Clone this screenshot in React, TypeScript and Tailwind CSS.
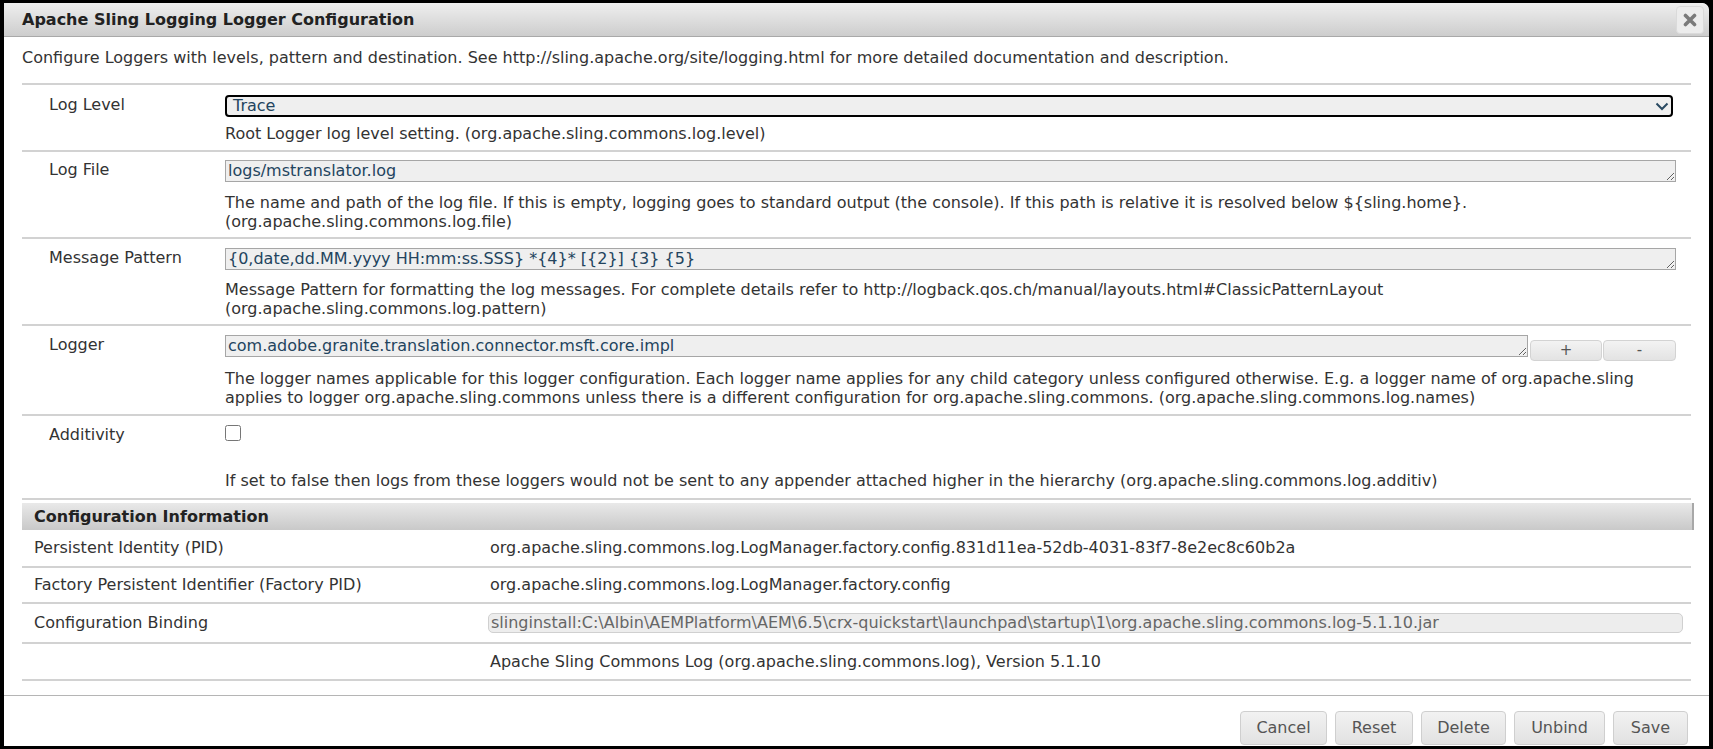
import React from "react";

const FONT = "font-['DejaVu_Sans','Verdana',sans-serif]";

function Row({
  label,
  children,
  className = "",
}: {
  label: string;
  children: React.ReactNode;
  className?: string;
}) {
  return (
    <div className={`flex border-t-2 border-[#d2d2d2] ${className}`}>
      <div className="w-[203px] shrink-0 pl-[27px] leading-[19px]">{label}</div>
      <div className="flex-1 pr-[15px] min-w-0">{children}</div>
    </div>
  );
}

function Help({ lines }: { lines: string[] }) {
  return (
    <div className="leading-[19px] whitespace-nowrap">
      {lines.map((l, i) => (
        <div key={i}>{l}</div>
      ))}
    </div>
  );
}

function Field({ value, className = "" }: { value: string; className?: string }) {
  return (
    <textarea
      readOnly
      rows={1}
      defaultValue={value}
      className={`block h-[22px] w-full resize overflow-hidden bg-[#efefef] border border-[#a6a6a6] px-[2px] py-0 leading-[20px] text-[#23445e] text-[16px] ${FONT} ${className}`}
    />
  );
}

function SmallBtn({ children }: { children: React.ReactNode }) {
  return (
    <div className="h-[21px] flex items-center justify-center rounded-[4px] border border-[#d3d3d3] bg-gradient-to-b from-[#f3f3f3] to-[#e3e3e3] text-[#555] text-[15px]">
      {children}
    </div>
  );
}

function FooterBtn({ children, w }: { children: React.ReactNode; w: string }) {
  return (
    <div
      className={`${w} h-[34px] flex items-center justify-center rounded-[4px] border border-[#cfcfcf] bg-gradient-to-b from-[#f2f2f2] to-[#e2e2e2] text-[#555] text-[16px]`}
    >
      {children}
    </div>
  );
}

function InfoRow({
  label,
  children,
  h,
}: {
  label: string;
  children: React.ReactNode;
  h: string;
}) {
  return (
    <div className={`flex items-center ${h} border-b-2 border-[#d2d2d2]`}>
      <div className="w-[466px] shrink-0 pl-[12px]">{label}</div>
      <div className="flex-1 min-w-0 pr-[8px]">{children}</div>
    </div>
  );
}

export default function App() {
  const binding = String.raw`slinginstall:C:\Albin\AEMPlatform\AEM\6.5\crx-quickstart\launchpad\startup\1\org.apache.sling.commons.log-5.1.10.jar`;
  return (
    <div className={`w-[1713px] h-[749px] bg-black pt-[3px] px-[4px] pb-[3px] ${FONT} text-[16px] text-[#333]`}>
      <div className="h-full bg-white flex flex-col overflow-hidden rounded-tr-[7px]">
        {/* Title bar */}
        <div className="h-[34px] shrink-0 flex items-center justify-between pl-[18px] pr-[5px] bg-gradient-to-b from-[#efefef] to-[#cdcdcd] border-b border-[#a9a9a9] rounded-tr-[7px]">
          <div className="font-bold text-[16px] text-[#222]">Apache Sling Logging Logger Configuration</div>
          <div className="w-[28px] h-[28px] rounded-[4px] bg-[#ececec] border border-[#dadada] flex items-center justify-center">
            <svg width="14" height="14" viewBox="0 0 14 14">
              <path d="M2.5 2.5 L11.5 11.5 M11.5 2.5 L2.5 11.5" stroke="#7a7a7a" strokeWidth="3.6" strokeLinecap="round" />
            </svg>
          </div>
        </div>

        {/* Content */}
        <div className="px-[18px] flex-1 min-h-0">
          <div className="pt-[11px] pb-[16px] leading-[19px] whitespace-nowrap">
            Configure Loggers with levels, pattern and destination. See http://sling.apache.org/site/logging.html for more detailed documentation and description.
          </div>

          {/* Log Level */}
          <Row label="Log Level" className="pt-[10px] pb-[7px]">
            <div className="relative mr-[3px]">
              <div className="h-[22px] rounded-[4px] border-2 border-black bg-[#efefef] pl-[6px] flex items-center text-[#23445e]">
                Trace
              </div>
              <svg className="absolute right-[4px] top-[7px]" width="14" height="9" viewBox="0 0 14 9">
                <path d="M1.5 1.5 L7 7 L12.5 1.5" stroke="#2a4a62" strokeWidth="2" fill="none" />
              </svg>
            </div>
            <div className="mt-[7px]">
              <Help lines={["Root Logger log level setting. (org.apache.sling.commons.log.level)"]} />
            </div>
          </Row>

          {/* Log File */}
          <Row label="Log File" className="pt-[8px] pb-[6px]">
            <Field value="logs/mstranslator.log" />
            <div className="mt-[11px]">
              <Help
                lines={[
                  "The name and path of the log file. If this is empty, logging goes to standard output (the console). If this path is relative it is resolved below ${sling.home}.",
                  "(org.apache.sling.commons.log.file)",
                ]}
              />
            </div>
          </Row>

          {/* Message Pattern */}
          <Row label="Message Pattern" className="pt-[9px] pb-[6px]">
            <Field value={"{0,date,dd.MM.yyyy HH:mm:ss.SSS} *{4}* [{2}] {3} {5}"} />
            <div className="mt-[10px]">
              <Help
                lines={[
                  "Message Pattern for formatting the log messages. For complete details refer to http://logback.qos.ch/manual/layouts.html#ClassicPatternLayout",
                  "(org.apache.sling.commons.log.pattern)",
                ]}
              />
            </div>
          </Row>

          {/* Logger */}
          <Row label="Logger" className="pt-[9px] pb-[7px]">
            <div className="flex items-start">
              <div className="flex-1 min-w-0">
                <Field value="com.adobe.granite.translation.connector.msft.core.impl" />
              </div>
              <div className="w-[72px] ml-[2px] mt-[5px]">
                <SmallBtn>+</SmallBtn>
              </div>
              <div className="w-[73px] ml-[1px] mt-[5px]">
                <SmallBtn>-</SmallBtn>
              </div>
            </div>
            <div className="mt-[8px]">
              <Help
                lines={[
                  "The logger names applicable for this logger configuration. Each logger name applies for any child category unless configured otherwise. E.g. a logger name of org.apache.sling",
                  "applies to logger org.apache.sling.commons unless there is a different configuration for org.apache.sling.commons. (org.apache.sling.commons.log.names)",
                ]}
              />
            </div>
          </Row>

          {/* Additivity */}
          <Row label="Additivity" className="pt-[9px] pb-[8px]">
            <input type="checkbox" className="block w-[16px] h-[16px] m-0" />
            <div className="mt-[30px]">
              <Help
                lines={[
                  "If set to false then logs from these loggers would not be sent to any appender attached higher in the hierarchy (org.apache.sling.commons.log.additiv)",
                ]}
              />
            </div>
          </Row>

          {/* Configuration Information */}
          <div className="border-t-2 border-[#d2d2d2] pt-[3px]">
            <div className="h-[27px] flex items-center pl-[12px] bg-gradient-to-b from-[#e9e9e9] to-[#c9c9c9] border-r-2 border-[#a8a8a8] mr-[-3px] font-bold text-[16px] text-[#222]">
              Configuration Information
            </div>
            <InfoRow label="Persistent Identity (PID)" h="h-[38px]">
              <div className="pl-[2px]">org.apache.sling.commons.log.LogManager.factory.config.831d11ea-52db-4031-83f7-8e2ec8c60b2a</div>
            </InfoRow>
            <InfoRow label="Factory Persistent Identifier (Factory PID)" h="h-[36px]">
              <div className="pl-[2px]">org.apache.sling.commons.log.LogManager.factory.config</div>
            </InfoRow>
            <InfoRow label="Configuration Binding" h="h-[40px]">
              <div className="h-[20px] rounded-[5px] border border-[#d0d0d0] bg-[#ededed] pl-[2px] flex items-center text-[#666] whitespace-nowrap overflow-hidden">
                {binding}
              </div>
            </InfoRow>
            <InfoRow label="" h="h-[37px]">
              <div className="pl-[2px]">Apache Sling Commons Log (org.apache.sling.commons.log), Version 5.1.10</div>
            </InfoRow>
          </div>
        </div>

        {/* Footer */}
        <div className="h-[51px] shrink-0 border-t border-[#b5b5b5] flex justify-end gap-[8px] pt-[15px] pr-[21px]">
          <FooterBtn w="w-[87px]">Cancel</FooterBtn>
          <FooterBtn w="w-[78px]">Reset</FooterBtn>
          <FooterBtn w="w-[85px]">Delete</FooterBtn>
          <FooterBtn w="w-[91px]">Unbind</FooterBtn>
          <FooterBtn w="w-[75px]">Save</FooterBtn>
        </div>
      </div>
    </div>
  );
}
